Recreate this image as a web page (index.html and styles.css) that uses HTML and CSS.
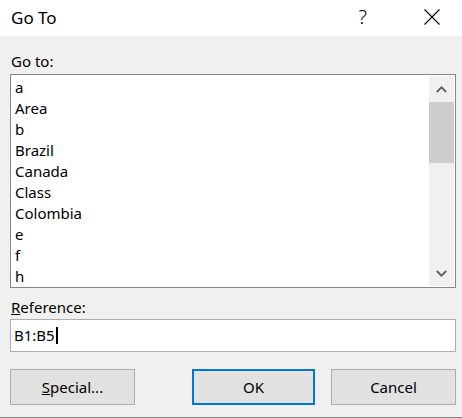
FILE: index.html
```html
<!DOCTYPE html>
<html lang="en">
<head>
    <meta charset="UTF-8">
    <title>Go To</title>
    <link rel="stylesheet" href="styles.css">
</head>
<body>
    <div class="dialog">
        <div class="titlebar">
            <span class="title">Go To</span>
            <span class="help">?</span>
            <svg class="close" width="16" height="16" viewBox="0 0 16 16">
                <path d="M0.5 0.5 L15.5 15.5 M15.5 0.5 L0.5 15.5" stroke="#000" stroke-width="1.1" fill="none"/>
            </svg>
        </div>

        <div class="body">
            <div class="label goto-label">Go to:</div>
            <div class="listbox">
                <ul class="items">
                    <li>a</li>
                    <li>Area</li>
                    <li>b</li>
                    <li>Brazil</li>
                    <li>Canada</li>
                    <li>Class</li>
                    <li>Colombia</li>
                    <li>e</li>
                    <li>f</li>
                    <li>h</li>
                </ul>
                <div class="scrollbar">
                    <div class="arrow">
                        <svg width="11" height="7" viewBox="0 0 11 7"><path d="M0.8 6 L5.5 1.3 L10.2 6" stroke="#606060" stroke-width="1.8" fill="none"/></svg>
                    </div>
                    <div class="thumb"></div>
                    <div class="track"></div>
                    <div class="arrow">
                        <svg width="11" height="7" viewBox="0 0 11 7"><path d="M0.8 1 L5.5 5.7 L10.2 1" stroke="#606060" stroke-width="1.8" fill="none"/></svg>
                    </div>
                </div>
            </div>

            <div class="label ref-label"><u>R</u>eference:</div>
            <div class="input">B1:B5<span class="caret"></span></div>

            <div class="buttons">
                <button class="btn"><u>S</u>pecial...</button>
                <button class="btn default">OK</button>
                <button class="btn">Cancel</button>
            </div>
        </div>
    </div>
</body>
</html>
```

FILE: styles.css
```css
body {
    margin: 0;
    padding: 0;
    font-family: 'Noto Sans', 'Liberation Sans', sans-serif;
    color: #000;
    background-color: #f0f0f0;
}

.dialog {
    width: 462px;
    height: 418px;
    box-sizing: border-box;
    border-bottom: 1px solid #8a8a8a;
    background-color: #f0f0f0;
}

.titlebar {
    height: 36px;
    background-color: #fff;
    display: flex;
    align-items: center;
    padding-left: 11px;
}

.title {
    font-size: 17px;
    flex: 1;
    margin-top: -2px;
}

.help {
    font-size: 20px;
    font-weight: 300;
    margin-right: 57px;
    margin-top: -3px;
}

.close {
    margin-right: 22px;
    margin-top: -2px;
}

.body {
    padding: 0 6px 0 10px;
}

.label {
    font-size: 15px;
    line-height: 20px;
    padding-left: 1px;
}

.goto-label {
    padding-top: 15px;
    height: 23px;
}

.listbox {
    height: 214px;
    box-sizing: border-box;
    border: 1px solid #828790;
    background-color: #fff;
    display: flex;
}

.items {
    flex: 1;
    list-style: none;
    margin: 0;
    padding: 2px 0 0 4px;
    font-size: 15px;
    line-height: 21px;
}

.scrollbar {
    width: 25px;
    margin: 1px 1px 1px 0;
    background-color: #f0f0f0;
    display: flex;
    flex-direction: column;
}

.arrow {
    height: 26px;
    display: grid;
    place-items: center;
}

.thumb {
    height: 61px;
    background-color: #cdcdcd;
}

.track {
    flex: 1;
}

.ref-label {
    padding-top: 9px;
    height: 22px;
}

.input {
    height: 33px;
    box-sizing: border-box;
    border: 1px solid #adadad;
    background-color: #fff;
    font-size: 15px;
    line-height: 31px;
    padding-left: 3px;
    display: flex;
    align-items: center;
}

.caret {
    display: inline-block;
    width: 2px;
    height: 17px;
    background-color: #000;
    margin-left: 1px;
}

.buttons {
    display: flex;
    justify-content: space-between;
    margin-top: 17px;
}

.btn {
    width: 125px;
    height: 36px;
    box-sizing: border-box;
    border: 1px solid #adadad;
    background-color: #e1e1e1;
    font-family: 'Noto Sans', 'Liberation Sans', sans-serif;
    font-size: 15px;
    color: #000;
    padding: 0;
}

.default {
    width: 123px;
    border: 2px solid #0078d7;
    margin-left: 57px;
    margin-right: 16px;
}

.btn:first-child {
    margin-right: auto;
}
```
